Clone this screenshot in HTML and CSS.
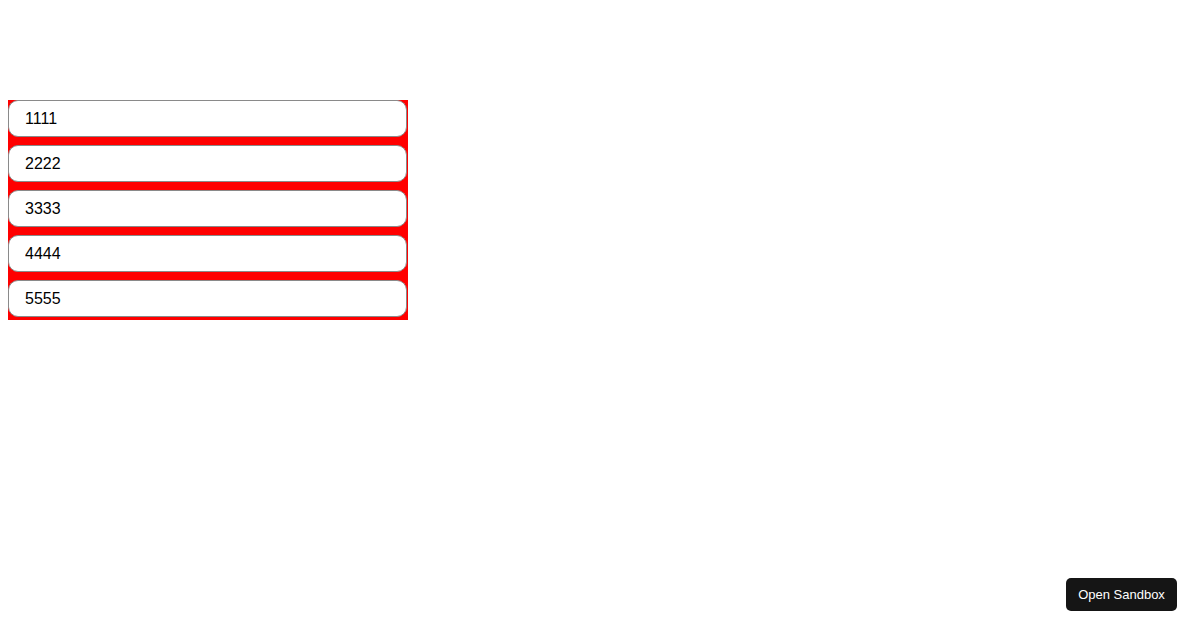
FILE: index.html
```html
<!DOCTYPE html>
<html>
<head>
<meta charset="utf-8">
<link rel="stylesheet" href="styles.css">
</head>
<body>
<div class="list">
  <input class="item" value="1111">
  <input class="item" value="2222">
  <input class="item" value="3333">
  <input class="item" value="4444">
  <input class="item" value="5555">
</div>
<button class="sandbox">Open Sandbox</button>
</body>
</html>
```
FILE: styles.css
```css
html, body {
  margin: 0;
  background: #fff;
  font-family: "Liberation Sans", Arial, sans-serif;
}
body {
  padding: 100px 8px 0 8px;
}
.list {
  width: 400px;
  height: 220px;
  box-sizing: border-box;
  background: #ff0000;
  display: flex;
  flex-direction: column;
  gap: 8px;
}
.item {
  display: block;
  width: 399px;
  height: 37px;
  box-sizing: border-box;
  margin: 0;
  padding: 0 16px;
  border: 1px solid #8a8a8a;
  border-radius: 10px;
  background: #fff;
  font-family: "Liberation Sans", Arial, sans-serif;
  font-size: 16px;
  color: #000;
  outline: none;
}
.sandbox {
  position: fixed;
  right: 23px;
  bottom: 19px;
  width: 111px;
  height: 33px;
  padding: 0;
  border: none;
  border-radius: 5px;
  background: #151515;
  color: #fff;
  font-family: "Liberation Sans", Arial, sans-serif;
  font-size: 13px;
}
```
